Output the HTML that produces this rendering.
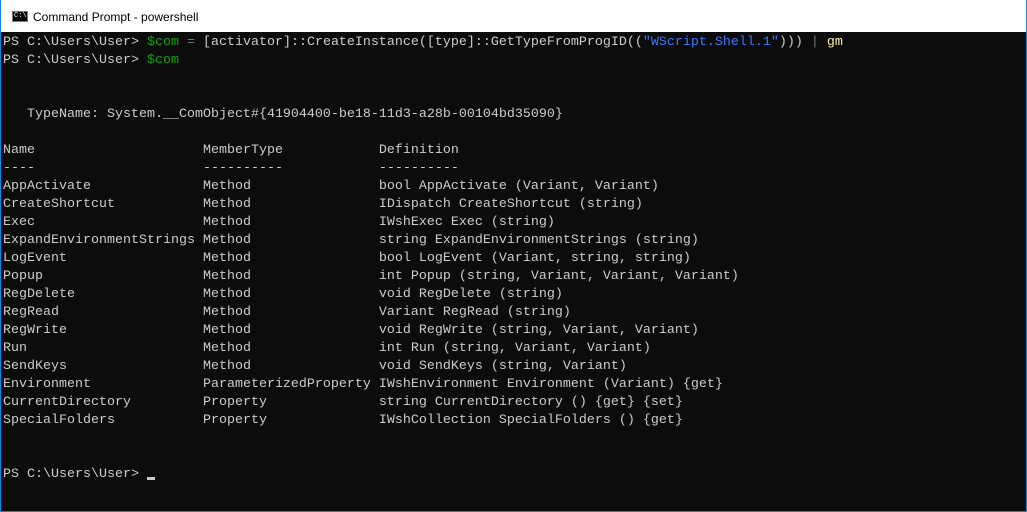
<!DOCTYPE html>
<html><head><style>
body{margin:0;width:1027px;height:512px;overflow:hidden;background:#0c0c0c;position:relative}
.win{position:absolute;left:0;top:0;width:1025px;height:511px;border:1px solid #1883d7;border-top:none;background:#0c0c0c}
.title{position:absolute;left:0;top:0;width:1025px;height:32px;background:#fff;font:12px "Liberation Sans",sans-serif;color:#000}
.title span{position:absolute;left:32px;top:10px}
.ico{position:absolute;left:11px;top:11px;width:16px;height:11px;background:#000;border:1px solid #777;box-sizing:border-box}
.ico:after{content:"C:\\";position:absolute;left:1px;top:0;color:#fff;font:7px "Liberation Mono",monospace}
pre{position:absolute;left:3px;top:34px;margin:0;font:13.33px/18px "Liberation Mono",monospace;color:#cccccc;white-space:pre}
.g{color:#13a10e}.y{color:#f9f1a5}.b{color:#3b78ff}.d{color:#767676}.w{color:#cccccc}
.cur{display:inline-block;width:8px;height:3px;background:#ccc;vertical-align:-3px}
</style></head><body>
<div class="win">
<div class="title"><div class="ico"></div><span>Command Prompt - powershell</span></div>
</div>
<pre>PS C:\Users\User&gt; <span class="g">$com</span> <span class="d">=</span> [activator]::CreateInstance([type]::GetTypeFromProgID((<span class="b">"WScript.Shell.1"</span>))) <span class="d">|</span> <span class="y">gm</span>
PS C:\Users\User&gt; <span class="g">$com</span>


   TypeName: System.__ComObject#{41904400-be18-11d3-a28b-00104bd35090}

Name                     MemberType            Definition
----                     ----------            ----------
AppActivate              Method                bool AppActivate (Variant, Variant)
CreateShortcut           Method                IDispatch CreateShortcut (string)
Exec                     Method                IWshExec Exec (string)
ExpandEnvironmentStrings Method                string ExpandEnvironmentStrings (string)
LogEvent                 Method                bool LogEvent (Variant, string, string)
Popup                    Method                int Popup (string, Variant, Variant, Variant)
RegDelete                Method                void RegDelete (string)
RegRead                  Method                Variant RegRead (string)
RegWrite                 Method                void RegWrite (string, Variant, Variant)
Run                      Method                int Run (string, Variant, Variant)
SendKeys                 Method                void SendKeys (string, Variant)
Environment              ParameterizedProperty IWshEnvironment Environment (Variant) {get}
CurrentDirectory         Property              string CurrentDirectory () {get} {set}
SpecialFolders           Property              IWshCollection SpecialFolders () {get}


PS C:\Users\User&gt; <span class="cur"></span></pre>
</body></html>
